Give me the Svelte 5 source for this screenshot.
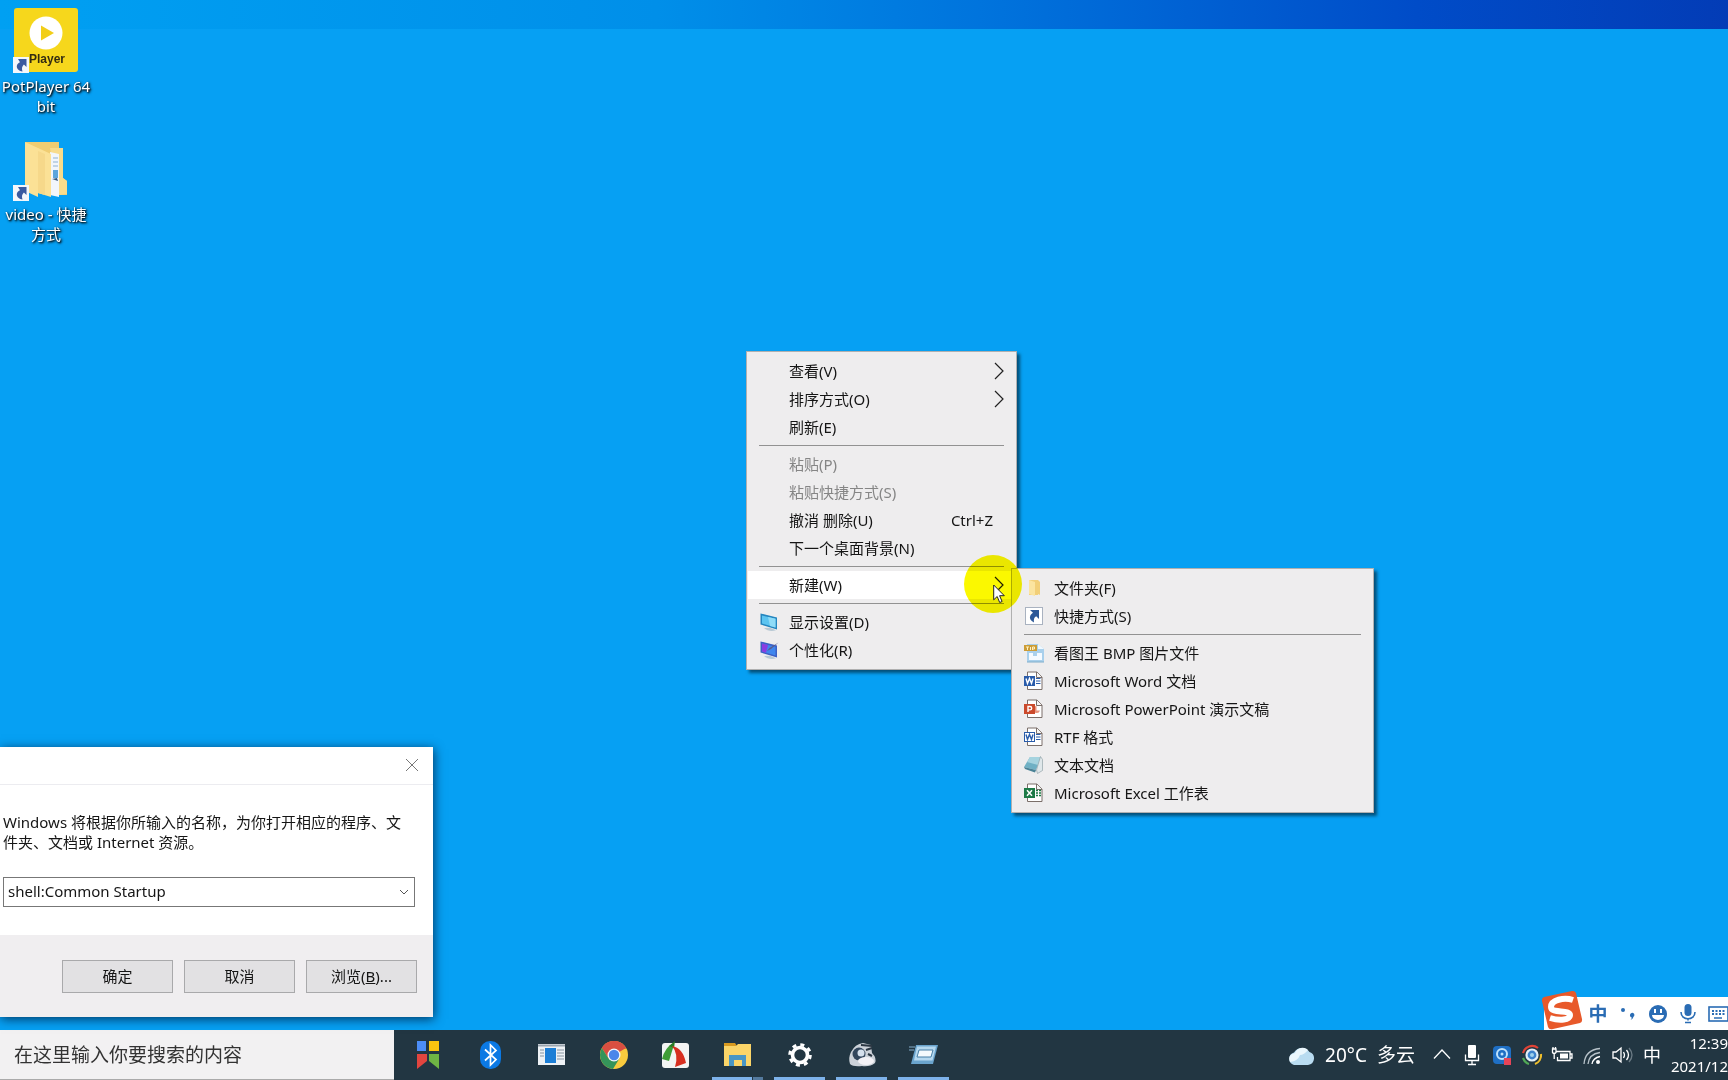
<script>
  const mainMenu = [
    { label: '查看(V)', arrow: true },
    { label: '排序方式(O)', arrow: true },
    { label: '刷新(E)' },
    { sep: true },
    { label: '粘贴(P)', disabled: true },
    { label: '粘贴快捷方式(S)', disabled: true },
    { label: '撤消 删除(U)', key: 'Ctrl+Z' },
    { label: '下一个桌面背景(N)' },
    { sep: true },
    { label: '新建(W)', arrow: true, active: true },
    { sep: true },
    { label: '显示设置(D)', icon: 'display' },
    { label: '个性化(R)', icon: 'personal' },
  ];
  const newMenu = [
    { label: '文件夹(F)', icon: 'folder' },
    { label: '快捷方式(S)', icon: 'shortcut' },
    { sep: true },
    { label: '看图王 BMP 图片文件', icon: 'bmp' },
    { label: 'Microsoft Word 文档', icon: 'word' },
    { label: 'Microsoft PowerPoint 演示文稿', icon: 'ppt' },
    { label: 'RTF 格式', icon: 'rtf' },
    { label: '文本文档', icon: 'text' },
    { label: 'Microsoft Excel 工作表', icon: 'excel' },
  ];
  const apps = [
    { name: '桌面助手', icon: 'tiles' },
    { name: '蓝牙', icon: 'bluetooth' },
    { name: '阅读', icon: 'reader' },
    { name: 'Chrome', icon: 'chrome' },
    { name: '截图工具', icon: 'capture' },
    { name: '文件资源管理器', icon: 'explorer', open: true, stacked: true },
    { name: '设置', icon: 'gear', open: true },
    { name: '录制', icon: 'recorder', open: true },
    { name: '运行', icon: 'run', open: true },
  ];
  const tray = ['up', 'mic', 'blueApp', 'ring', 'battery', 'wifi', 'volume'];
  const ime = ['punct', 'smile', 'imeMic', 'keyboard'];
</script>

{#snippet shortcutMark()}
  <svg class="mark" viewBox="0 0 16 16" aria-hidden="true">
    <rect width="16" height="16" fill="#f4f7fb" />
    <path d="M5 2h8.500v8l-2.600-2.400C9 9.500 8.500 11.500 9.500 14.500 5.500 14 3 11 4 8.200c.4-1.300 1.600-2.300 3-3z" fill="#3a5aa0" />
  </svg>
{/snippet}

{#snippet officeDoc(color, kind)}
  <path d="M3.500 1h9.500l5 5v12.500H3.500z" fill="#fff" stroke="#7b6f6a" />
  <path d="M12.500 1v5.500H18" fill="#f4f4f4" stroke="#7b6f6a" />
  {#if kind === 'excel'}
    <path d="M12 7.500h2M15 7.500h2M12 10h2M15 10h2M12 12.500h2M15 12.500h2" stroke={color} stroke-width="1.500" />
  {:else if kind === 'ppt'}
    <path d="M12.500 7a3.500 3.500 0 1 0 3.500 4.500h-3.500z" fill="#e8937c" />
  {:else}
    <path d="M12 7.500h4.500M12 10h4.500M12 12.500h4.500" stroke={color} />
  {/if}
  {#if kind === 'rtf'}
    <rect x=".5" y="5.500" width="10" height="9" fill="#fff" stroke={color} />
  {:else}
    <rect y="5" width="11" height="10" fill={color} />
  {/if}
{/snippet}

{#snippet menuIcon(name)}
  <svg viewBox="0 0 20 20" fill="none" aria-hidden="true">
    {#if name === 'display' || name === 'personal'}
      <path d="M1.500 1.500l16.500 4v12L1.500 12.500z" fill={name === 'display' ? '#2586bf' : '#3c60c4'} />
      <path d="M3 3.500l13.500 3.300v8.700l-13.500-4z" fill={name === 'display' ? '#5cc4f0' : '#3f86ee'} />
      {#if name === 'personal'}
        <path d="M3 3.500l6 1.500-2 7.700-4-1.200z" fill="#8a3de0" />
        <path d="M8 11l2.500-3 9-5.500-7.500 6.500z" fill="#5c5a88" />
      {:else}
        <path d="M9 5l7.500 1.800v8.700L11 13.900z" fill="#8fdcf8" />
      {/if}
      <path d="M5 16c3 3 8 3.500 12 2.300l-6-2.500z" fill="#b8c9d4" />
    {:else if name === 'folder'}
      <path d="M5 2h9l2 2v13l-2-1V17H5z" fill="#f2cf78" />
      <path d="M5 2l6 2v14l-6-2z" fill="#fbe4a0" />
    {:else if name === 'shortcut'}
      <rect x="1.500" y="1.500" width="17" height="17" fill="#fff" stroke="#a9b2c0" />
      <path d="M6 4h9v9l-2.800-2.800C10 11.500 9.500 13.500 10 16.500 6.500 14.500 5.200 12.500 6.200 10c.5-1.200 1.400-2.200 2.800-3.200z" fill="#2b5797" />
    {:else if name === 'bmp'}
      <path d="M3 1h11l6 5v13H3z" fill="#a9d0ec" />
      <path d="M5 10h4v3h4v-3h5v7H5z" fill="#f4faff" />
      <path d="M14 1v5h6z" fill="#eff8ff" />
      <rect y="2" width="13" height="6" fill="#cc9c36" />
      <path d="M2 4h3M3.500 4v3M6.500 4v3M8.500 7V4h2v2h-2" stroke="#fff1c0" />
      <path d="M3 19h17" stroke="#7eaecb" />
    {:else if name === 'word'}
      {@render officeDoc('#2a5caa', 'word')}
      <path d="M2 7.500l1.500 5 2-5 2 5 1.500-5" stroke="#fff" stroke-width="1.400" />
    {:else if name === 'rtf'}
      {@render officeDoc('#2a5caa', 'rtf')}
      <path d="M2 7.500l1.500 5 2-5 2 5 1.500-5" stroke="#2a5caa" stroke-width="1.400" />
    {:else if name === 'ppt'}
      {@render officeDoc('#cb4a2c', 'ppt')}
      <path d="M4 13V7.500h2a1.700 1.700 0 0 1 0 3.400H4" stroke="#fff" stroke-width="1.400" />
    {:else if name === 'excel'}
      {@render officeDoc('#1c7a46', 'excel')}
      <path d="M3 7.300l5 5.500M8 7.300l-5 5.500" stroke="#fff" stroke-width="1.500" />
    {:else if name === 'text'}
      <path d="M6 2l11 0L12 15 0 12z" fill="#6fb0c4" />
      <path d="M6 2l11 0-3 8L3 7z" fill="#a5d3df" />
      <path d="M0 12l12 3-1 2.500L1 14z" fill="#4a8296" />
      <path d="M16.500 1.500l2 3v11l-5 3-1-3.500z" fill="#dfe7ea" stroke="#8698a0" stroke-width=".6" />
    {/if}
  </svg>
{/snippet}

{#snippet menu(items, label)}
  <ul class="menu" role="menu" aria-label={label}>
    {#each items as item}
      {#if item.sep}
        <li class="sep" role="separator"></li>
      {:else}
        <li role="none">
          <button class="item" class:active={item.active} role="menuitem" disabled={item.disabled}>
            <span class="slot">{#if item.icon}{@render menuIcon(item.icon)}{/if}</span>
            <span class="label">{item.label}</span>
            {#if item.key}<kbd>{item.key}</kbd>{/if}
            {#if item.arrow}
              <svg class="arrow" viewBox="0 0 10 18" aria-hidden="true"><path d="M1 1l8 8-8 8" fill="none" stroke="#222" stroke-width="1.200" /></svg>
            {/if}
          </button>
        </li>
      {/if}
    {/each}
  </ul>
{/snippet}

<div class="screen">
  <main class="desktop">
    <div class="icons">
      <button class="shortcut">
        <span class="pic">
          <svg viewBox="0 0 64 64" aria-hidden="true">
            <rect width="64" height="64" rx="3" fill="#f6d71c" />
            <circle cx="32" cy="25" r="16.500" fill="#fff" />
            <path d="M27 17.500v15L40 25z" fill="#f2ce18" />
            <text x="33" y="55" text-anchor="middle" class="logo-text">Player</text>
          </svg>
          {@render shortcutMark()}
        </span>
        <span>PotPlayer 64 bit</span>
      </button>
      <button class="shortcut">
        <span class="pic">
          <svg viewBox="0 0 64 64" aria-hidden="true">
            <path d="M11 6h34v6h4v30l4 3v14H32z" fill="#f0cd72" />
            <path d="M36 12l13 0v30l4 3v13l-8 1z" fill="#f8dc8c" />
            <path d="M36 16l9 2v43l-9-2z" fill="#f2f6fb" />
            <path d="M39 22h5M39 26h5M39 30h5" stroke="#8fb1d0" />
            <path d="M39 34h5v8h-5z" fill="#5aa5dc" />
            <path d="M38 43l6 2-1-3z" fill="#33567c" />
            <path d="M11 6l26 12v43L24 57v4L11 55z" fill="#fbe196" />
            <path d="M24 15l7 3v41l-7-2z" fill="#f6d88a" />
          </svg>
          {@render shortcutMark()}
        </span>
        <span>video - 快捷方式</span>
      </button>
    </div>

    <div class="context">{@render menu(mainMenu, '桌面')}</div>
    <div class="submenu">{@render menu(newMenu, '新建')}</div>
    <div class="halo"></div>
    <svg class="pointer" viewBox="0 0 12 20" aria-hidden="true">
      <path d="M.7 1v14.800l3.500-3.300 2.500 6 2.400-1-2.500-5.800h4.700z" fill="#fff" stroke="#222" />
    </svg>

    <form class="run" aria-label="运行" onsubmit={(e) => e.preventDefault()}>
      <header>
        <button type="button" class="close" aria-label="关闭">
          <svg viewBox="0 0 14 14"><path d="M1 1l12 12M13 1L1 13" stroke="#777" /></svg>
        </button>
      </header>
      <div class="run-body">
        <label for="command">Windows 将根据你所输入的名称，为你打开相应的程序、文件夹、文档或 Internet 资源。</label>
        <div class="combo">
          <select id="command"><option>shell:Common Startup</option></select>
          <svg viewBox="0 0 10 6" aria-hidden="true"><path d="M1 1l4 4 4-4" fill="none" stroke="#555" /></svg>
        </div>
      </div>
      <footer>
        <button type="button">确定</button>
        <button type="button">取消</button>
        <button type="button">浏览(<u>B</u>)...</button>
      </footer>
    </form>

    <div class="ime">
      <svg class="sogou" viewBox="0 0 42 40" aria-hidden="true">
        <path d="M3 7L31 1q3-.5 4 2l6 26q.5 3-2 4L12 39q-4 1-5-2L1 11q-.5-3 2-4z" fill="#e8592a" />
        <path d="M32 10C23 7 10 10 10 17c0 7 19 2 19 8 0 5-10 6-20 3" fill="none" stroke="#fff" stroke-width="6" />
      </svg>
      <button class="mode">中</button>
      {#each ime as name}
        <button aria-label={name}>
          <svg viewBox="0 0 20 20" fill="none">
            {#if name === 'punct'}
              <circle cx="5" cy="6" r="2" fill="#2a6cb4" />
              <path d="M12 11a2.200 2.200 0 1 1 3.500 1.800Q15 15 12.500 16q1.500-1.500 1.200-2.500A2.200 2.200 0 0 1 12 11z" fill="#2a6cb4" />
            {:else if name === 'smile'}
              <circle cx="10" cy="10" r="9" fill="#2a6cb4" />
              <path d="M7 5v4M13 5v4" stroke="#fff" stroke-width="2" />
              <path d="M4 11h12a6 5 0 0 1-12 0z" fill="#fff" />
            {:else if name === 'imeMic'}
              <rect x="6.500" y="0" width="7" height="12" rx="3.500" fill="#2a6cb4" />
              <path d="M3 8c0 9 14 9 14 0M10 14.500v2M7 18.500h6" stroke="#2a6cb4" stroke-width="1.600" />
            {:else}
              <rect x="1" y="3" width="19" height="14" stroke="#2a6cb4" stroke-width="1.600" />
              <path d="M4 7h14M4 10h14" stroke="#2a6cb4" stroke-width="2" stroke-dasharray="2 1.500" />
              <path d="M6 14h8" stroke="#2a6cb4" stroke-width="1.500" />
            {/if}
          </svg>
        </button>
      {/each}
    </div>
  </main>

  <div class="taskbar">
    <input class="search" type="text" placeholder="在这里输入你要搜索的内容" aria-label="搜索" />
    <nav class="apps">
      {#each apps as app}
        <button class:open={app.open} class:stacked={app.stacked} aria-label={app.name}>
          <svg viewBox="0 0 30 30" fill="none">
            {#if app.icon === 'tiles'}
              <path d="M4 1h9v10H4z" fill="#4c8df6" /><path d="M16 1h10v10H16z" fill="#fbc310" />
              <path d="M4 14h10v7L4 29z" fill="#e2453f" /><path d="M16 14h10v15l-10-8z" fill="#6fb544" />
            {:else if app.icon === 'bluetooth'}
              <rect x="5" y="1" width="21" height="28" rx="10" fill="#0b79e4" />
              <path d="M10 9.500l11 10-5.500 5.500V5l5.500 5.500-11 10" stroke="#fff" stroke-width="1.700" />
            {:else if app.icon === 'reader'}
              <rect x="1" y="4" width="27" height="21" fill="#eef2f5" /><path d="M1 5.500h27" stroke="#9aa5ae" stroke-width="2" />
              <rect x="8" y="8" width="11" height="15" fill="#1d7fd6" />
              <path d="M3 10h4M3 13h4M3 16h4M20 10h7M20 13h7M20 16h7M20 19h7" stroke="#8694a0" />
            {:else if app.icon === 'chrome'}
              <circle cx="15" cy="15" r="14" fill="#f9cb3e" />
              <path d="M15 15L2.900 8A14 14 0 0 1 27.100 8z" fill="#d94f41" /><path d="M15 8.500h12.400a14 14 0 0 0-24.500-.500L9.400 18.300z" fill="#d94f41" />
              <path d="M2.900 8A14 14 0 0 0 14 29l6.600-10.700L15 21l-5.600-2.700z" fill="#35945a" />
              <circle cx="15" cy="15" r="6.500" fill="#f5f8fa" /><circle cx="15" cy="15" r="5.200" fill="#4c87ea" />
            {:else if app.icon === 'capture'}
              <rect x="1" y="3" width="27" height="25" rx="3" fill="#f3f4f3" />
              <path d="M1 19Q4 7 13 3l-1 5-4 13z" fill="#3f9d36" /><path d="M8 6L14 1l-1 7z" fill="#287b24" />
              <path d="M11 6Q22 8 25 23l-11 4Q18 14 11 6z" fill="#d72f20" />
            {:else if app.icon === 'explorer'}
              <path d="M1 3h11l2 3h-13z" fill="#d89a20" /><path d="M1 6h12l2-2h13v22H1z" fill="#fbd568" />
              <path d="M6 26V15h17v11h-4v-6h-8v6z" fill="#4996c4" />
            {:else if app.icon === 'gear'}
              <circle cx="15" cy="15" r="7.500" stroke="#fff" stroke-width="3.600" />
              <circle cx="15" cy="15" r="10.300" stroke="#fff" stroke-width="3" stroke-dasharray="4 4.090" />
            {:else if app.icon === 'recorder'}
              <path d="M4 12Q8 4 16 3l8 2 1 8q5 5 3 10-5 4-13 3-9 1-12-2-2-6 1-12z" fill="#ccd2d9" />
              <circle cx="12" cy="14" r="6.500" fill="#32465c" /><circle cx="14" cy="13" r="3.500" fill="#d5e0ec" />
              <path d="M14 5l11 1M19 10l6-2M21 14l4 2" stroke="#2b3743" stroke-width="2" /><ellipse cx="19" cy="21" rx="8" ry="4" fill="#f3f2f6" />
            {:else}
              <path d="M7 5h22l-5 19H2z" fill="#6aa4cd" /><path d="M8 6.500h19l-3.500 14H5z" fill="#b5d8ef" />
              <path d="M10 10h14l-2 7H8z" fill="#f4fafd" stroke="#477fa6" /><path d="M0 7h6M0 10h5" stroke="#84acc9" />
            {/if}
          </svg>
        </button>
      {/each}
    </nav>
    <button class="weather">
      <svg viewBox="0 0 28 22" aria-hidden="true">
        <path d="M7 21a6.500 6.500 0 0 1 0-12.500A9 8.500 0 0 1 22.500 8 6.700 6.700 0 0 1 21 21z" fill="#b9dcf1" />
        <path d="M8 9a8 8 0 0 1 13-3q-4 5-8 5-2 6-10 7Q0 11 8 9z" fill="#ebf7fd" />
      </svg>
      <span>20°C</span><span>多云</span>
    </button>
    <div class="tray">
      {#each tray as name}
        <button aria-label={name}>
          <svg viewBox="0 0 22 22" fill="none" stroke="#fff" stroke-width="1.300">
            {#if name === 'up'}
              <path d="M3 14.500L11 6l8 8.500" />
            {:else if name === 'mic'}
              <rect x="7" y="1" width="8" height="13" rx="1" fill="#fff" stroke="none" />
              <path d="M4.500 10.500v6h13v-6M11 16.500v3.500M7 20.500h8" />
            {:else if name === 'blueApp'}
              <rect x="2" y="2" width="18" height="18" rx="4" fill="#1f6fc4" stroke="none" />
              <circle cx="11" cy="10" r="5" stroke="#bfe2fb" stroke-width="2" /><circle cx="11" cy="10" r="1.500" fill="#bfe2fb" stroke="none" />
              <path d="M13 14h7v7h-7z" fill="#e64458" stroke="none" />
            {:else if name === 'ring'}
              <path d="M2 9a9.500 9.500 0 0 1 15-5" stroke="#e04336" stroke-width="2.200" /><path d="M20 10a9.500 9.500 0 0 1-6 10" stroke="#efbe2b" stroke-width="2.200" />
              <path d="M2 14q2 5 6 6" stroke="#51a956" stroke-width="2.200" />
              <circle cx="11" cy="11" r="5.500" fill="#3d82cc" stroke="#e3eef6" stroke-width="2.200" /><circle cx="11" cy="11" r="2" fill="#9ed1ee" stroke="none" />
            {:else if name === 'battery'}
              <path d="M5 7.500h14v9H6.500V13M19.500 10h1.500v4h-1.500" /><path d="M9 9.500h8v5H9z" fill="#fff" stroke="none" />
              <path d="M1.500 5v3.500q1.500 2 3.500 0V5zM2 5V3M4.500 5V3M3.200 10v5" />
            {:else if name === 'wifi'}
              <g stroke="#b8c3ca"><path d="M3 20Q4 6 19 4.500M7 20Q8 10 19 8.500" /><path d="M11 20Q12 14 19 12.500" stroke="#fff" /></g>
              <circle cx="17" cy="18" r="2" fill="#fff" stroke="none" />
            {:else}
              <path d="M2 8h3l5-4v14l-5-4H2z" /><path d="M12.500 8q2 3 0 6M15.500 6q4 5 0 10" /><path d="M18 4q6 7 0 14" stroke="#6b7a84" />
            {/if}
          </svg>
        </button>
      {/each}
      <button class="lang">中</button>
    </div>
    <time class="clock" datetime="12:39"><span>12:39</span><span>2021/12</span></time>
  </div>
</div>

<style>
  :global(body) { margin: 0; }
  .screen {
    display: flex;
    flex-direction: column;
    height: 100vh;
    overflow: hidden;
    font: 15px/20px "Noto Sans", "Noto Sans CJK SC", sans-serif;
    color: #151515;
  }
  button, input, select { font: inherit; color: inherit; margin: 0; padding: 0; border: 0; background: none; border-radius: 0; }
  svg { display: block; flex: none; }

  .desktop {
    position: relative;
    flex: 1;
    display: flex;
    flex-direction: column;
    justify-content: space-between;
    align-items: flex-start;
    background: linear-gradient(90deg, #00a0f2, #008fe9 38%, #0072dc 58%, #004cc8 82%, #033cb6) top / 100% 29px no-repeat #06a0f3;
  }
  .icons { display: flex; flex-direction: column; gap: 20px; width: 92px; padding-top: 8px; }
  .shortcut {
    display: flex;
    flex-direction: column;
    align-items: center;
    gap: 4px;
    color: #fff;
    text-shadow: 1px 1px 2px #000, 1px 1px 3px #123;
  }
  .pic { position: relative; width: 64px; height: 64px; }
  .mark { position: absolute; left: -1px; bottom: -1px; width: 16px; height: 16px; }
  .logo-text { font: bold 12px "Liberation Sans", sans-serif; fill: #332c12; text-shadow: none; }

  .context { position: absolute; left: 746px; top: 351px; width: 271px; }
  .submenu { position: absolute; left: 1011px; top: 568px; width: 363px; }
  .menu {
    margin: 0;
    padding: 5px 1px;
    list-style: none;
    background: #eeedee;
    border: 1px solid #b0b0b0;
    box-shadow: 3px 3px 3px rgba(0, 0, 0, 0.5);
  }
  .item {
    display: flex;
    align-items: center;
    width: 100%;
    height: 28px;
    padding: 0 11px;
    text-align: left;
  }
  .item.active { background: #fff; }
  .item:disabled { color: #858585; }
  .slot { width: 30px; }
  .slot svg { width: 20px; height: 20px; }
  .label { flex: 1; white-space: nowrap; }
  kbd { font: inherit; padding-right: 11px; }
  .arrow { width: 10px; height: 18px; }
  .sep { height: 1px; margin: 4px 11px; background: #929292; }

  .halo {
    position: absolute;
    left: 964px;
    top: 555px;
    width: 58px;
    height: 58px;
    border-radius: 50%;
    background: #fbf800;
    mix-blend-mode: multiply;
  }
  .pointer { position: absolute; left: 993px; top: 584px; width: 12px; height: 20px; }

  .run {
    width: 433px;
    margin-bottom: 13px;
    background: #fff;
    box-shadow: 1px 2px 10px rgba(0, 20, 50, 0.75);
  }
  .run header { display: flex; justify-content: flex-end; height: 37px; border-bottom: 1px solid #ececf0; }
  .close { display: grid; place-items: center; width: 42px; height: 36px; }
  .close svg { width: 14px; height: 14px; }
  .run-body { padding: 27px 18px 28px 3px; }
  .run label { display: block; margin-bottom: 25px; }
  .combo { display: flex; align-items: center; border: 1px solid #777; padding-right: 5px; }
  .combo select { flex: 1; height: 28px; padding: 0 0 2px 4px; appearance: none; }
  .combo svg { width: 10px; height: 6px; }
  .run footer { display: flex; justify-content: flex-end; gap: 11px; padding: 25px 16px 24px; background: #f0eef0; }
  .run footer button { width: 111px; height: 33px; padding-bottom: 2px; background: #e2e1e3; border: 1px solid #a9a9ab; }

  .ime {
    position: absolute;
    right: -5px;
    bottom: 0;
    display: flex;
    align-items: center;
    height: 33px;
    background: #fff;
    color: #2a6cb4;
  }
  .sogou { width: 42px; height: 40px; margin: -7px 0 0 -3px; }
  .ime button { display: grid; place-items: center; width: 30px; height: 33px; }
  .ime svg:not(.sogou) { width: 20px; height: 20px; }
  .ime .mode { font-size: 19px; font-weight: bold; }

  .taskbar { display: flex; height: 50px; background: #223642; color: #fff; }
  .search {
    box-sizing: border-box;
    width: 394px;
    flex: none;
    padding: 0 14px;
    background: #f2f1f2;
    border-bottom: 1px solid #aaa;
    color: #333;
    font-size: 19px;
  }
  .search::placeholder { color: #333; opacity: 1; }
  .apps { display: flex; flex: 1; padding-left: 3px; }
  .apps button { position: relative; display: grid; place-items: center; width: 62px; flex: none; }
  .apps svg { width: 30px; height: 30px; }
  .apps .open::after { content: ""; position: absolute; left: 5px; right: 6px; bottom: 0; height: 3px; background: #7db2ea; }
  .apps .stacked::after { background: linear-gradient(90deg, #7db2ea 40px, #223642 40px, #223642 41px, #547a9e 41px); }
  .weather { display: flex; align-items: center; gap: 10px; padding-right: 12px; font-size: 19px; }
  .weather svg { width: 28px; height: 22px; }
  .tray { display: flex; }
  .tray button { display: grid; place-items: center; width: 30px; }
  .tray svg { width: 22px; height: 22px; }
  .tray .lang { font-size: 18px; }
  .clock { display: flex; flex-direction: column; justify-content: center; align-items: flex-end; width: 61px; line-height: 23px; white-space: nowrap; }
</style>
